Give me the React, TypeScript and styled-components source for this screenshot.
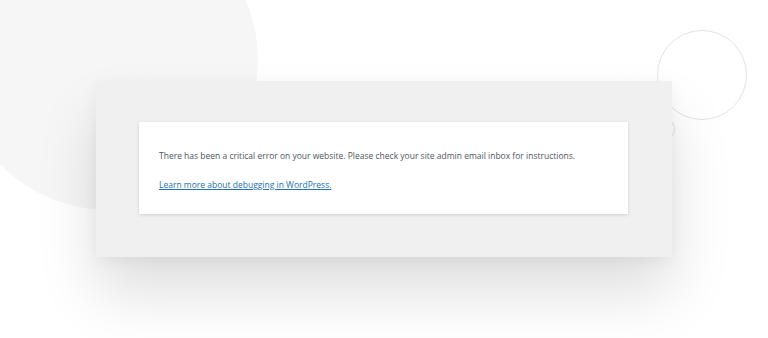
import * as React from 'react'
import styled, { createGlobalStyle } from 'styled-components'

const GlobalStyle = createGlobalStyle`
  html, body {
    margin: 0;
    padding: 0;
    background: #ffffff;
  }
  * {
    box-sizing: border-box;
  }
`

export default function App() {
  return (
    <>
      <GlobalStyle />
      <Stage>
        <BigBlob />
        <RingLarge />
        <RingSmall />
        <Panel>
          <Card>
            <Message>
              There has been a critical error on your website. Please check your site admin email inbox for
              instructions.
            </Message>
            <Message>
              <DocLink href="#">Learn more about debugging in WordPress.</DocLink>
            </Message>
          </Card>
        </Panel>
      </Stage>
    </>
  )
}

const Stage = styled.div`
  position: relative;
  width: 768px;
  height: 338px;
  overflow: hidden;
  background: #ffffff;
  padding: 81px 0 0 96px;
`

const BigBlob = styled.div`
  position: absolute;
  left: -42px;
  top: -90px;
  width: 300px;
  height: 300px;
  border-radius: 50%;
  background: #f6f6f6;
`

const RingLarge = styled.div`
  position: absolute;
  left: 657px;
  top: 30px;
  width: 90px;
  height: 90px;
  border-radius: 50%;
  border: 1px solid #e3e3e3;
`

const RingSmall = styled.div`
  position: absolute;
  left: 651px;
  top: 118px;
  width: 24px;
  height: 22px;
  border-radius: 50%;
  border: 1px solid #e3e3e3;
`

const Panel = styled.div`
  position: relative;
  width: 576px;
  height: 176px;
  background: #f0f0f0;
  padding: 41px 44px 43px 43px;
  box-shadow: 0 36px 60px rgba(0, 0, 0, 0.13), 0 4px 14px rgba(0, 0, 0, 0.05);
`

const Card = styled.div`
  height: 100%;
  background: #ffffff;
  box-shadow: 0 1px 3px rgba(0, 0, 0, 0.14);
  padding: 5px 20px 0;
  display: flex;
  flex-direction: column;
  justify-content: center;
  gap: 17px;
  font-family: 'Open Sans', 'Noto Sans', sans-serif;
  font-size: 8.5px;
  line-height: 12px;
  color: #4f565c;
`

const Message = styled.p`
  margin: 0;
`

const DocLink = styled.a`
  color: #2271b1;
  text-decoration: underline;
`
